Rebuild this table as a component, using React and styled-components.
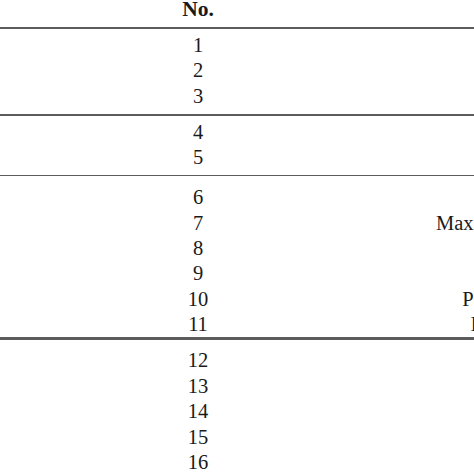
import React from "react";
import styled, { createGlobalStyle } from "styled-components";

const GlobalStyle = createGlobalStyle`
  html, body {
    margin: 0;
    padding: 0;
    background: #ffffff;
    overflow: hidden;
  }
  body {
    font-family: "Liberation Serif", "Times New Roman", serif;
    color: #1a1a1a;
  }
`;

const Table = styled.div`
  display: flex;
  flex-direction: column;
  width: 609px;
`;

const HeadRow = styled.div`
  display: grid;
  grid-template-columns: 396px 213px;
  padding-bottom: 9px;
  font-size: 21.5px;
  font-weight: 700;
  line-height: 18px;
  text-align: center;
`;

const Group = styled.div`
  display: flex;
  flex-direction: column;
  border-top: ${(p) => p.$rule}px solid #5c5c5c;
  padding-top: ${(p) => p.$top}px;
  padding-bottom: ${(p) => p.$bottom}px;
`;

const Row = styled.div`
  display: grid;
  grid-template-columns: 396px 213px;
  font-size: 20.5px;
  line-height: ${(p) => p.$pitch}px;
  text-align: center;
  white-space: nowrap;
`;

const Cell = styled.div`
  overflow: visible;
`;

const Label = styled(Cell)`
  padding-left: 2px;
`;

const groups = [
  {
    rule: 2,
    top: 4,
    bottom: 5,
    pitch: 25.3,
    rows: [
      ["1", "Mean"],
      ["2", "RMS"],
      ["3", "Std"],
    ],
  },
  {
    rule: 2,
    top: 4,
    bottom: 5,
    pitch: 25.3,
    rows: [
      ["4", "Skew"],
      ["5", "Kurt"],
    ],
  },
  {
    rule: 1.5,
    top: 9,
    bottom: 0,
    pitch: 25.3,
    rows: [
      ["6", "Mean"],
      ["7", "Maximum value"],
      ["8", "Min"],
      ["9", "RMS"],
      ["10", "Peak ratio"],
      ["11", "Impulse"],
    ],
  },
  {
    rule: 3,
    top: 8,
    bottom: 4,
    pitch: 25.5,
    rows: [
      ["12", "Mean"],
      ["13", "Std"],
      ["14", "Skew"],
      ["15", "Kurt"],
      ["16", "RMS"],
    ],
  },
];

export default function App() {
  return (
    <>
      <GlobalStyle />
      <Table>
        <HeadRow>
          <Cell>No.</Cell>
          <Cell />
        </HeadRow>
        {groups.map((g, i) => (
          <Group key={i} $rule={g.rule} $top={g.top} $bottom={g.bottom}>
            {g.rows.map(([no, name]) => (
              <Row key={no} $pitch={g.pitch}>
                <Cell>{no}</Cell>
                <Label>{name}</Label>
              </Row>
            ))}
          </Group>
        ))}
      </Table>
    </>
  );
}
